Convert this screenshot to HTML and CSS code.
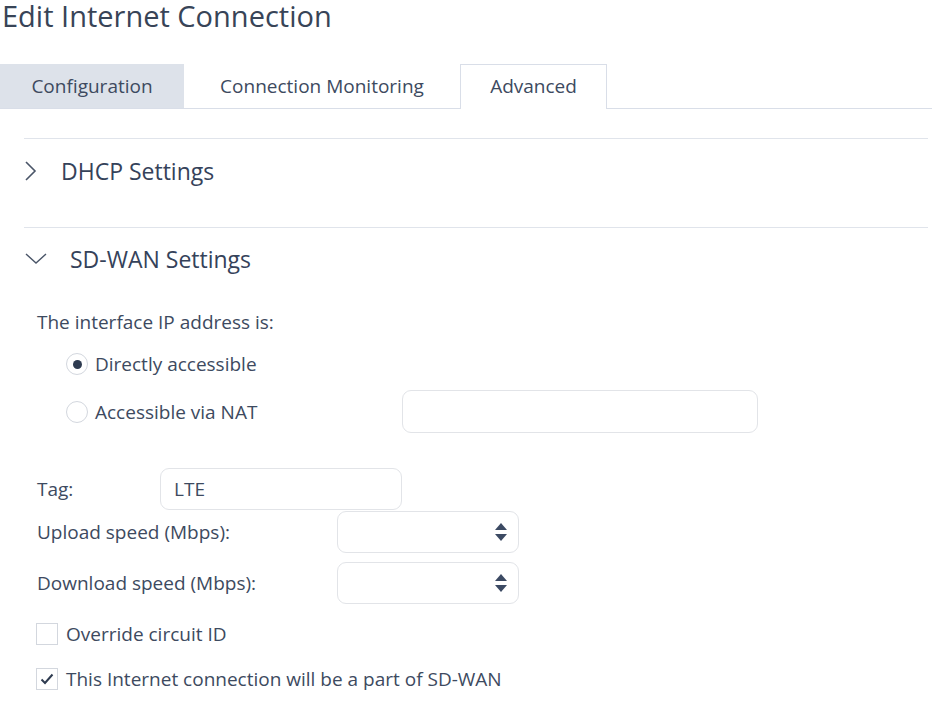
FILE: index.html
```html
<!doctype html>
<html>
<head>
    <meta charset="utf-8">
    <title>Edit Internet Connection</title>
    <link rel="stylesheet" href="styles.css">
</head>
<body>
<h1 class="title">Edit Internet Connection</h1>

<ul class="tabs">
    <li class="tab tab-config">Configuration</li>
    <li class="tab tab-monitor">Connection Monitoring</li>
    <li class="tab tab-adv active">Advanced</li>
</ul>

<div class="panel">
    <div class="section">
        <div class="sec-head sec-dhcp">
            <svg class="chev-right" width="14" height="22" viewBox="0 0 14 22">
                <path d="M2 2 L11 11 L2 20" fill="none" stroke="#4a5568" stroke-width="1.6"/>
            </svg>
            <span class="sec-title">DHCP Settings</span>
        </div>
    </div>

    <div class="section">
        <div class="sec-head sec-sdwan">
            <svg class="chev-down" width="22" height="14" viewBox="0 0 22 14">
                <path d="M1 2 L11 11 L21 2" fill="none" stroke="#4a5568" stroke-width="1.4"/>
            </svg>
            <span class="sec-title">SD-WAN Settings</span>
        </div>

        <div class="sec-body">
            <div class="row row-intro">The interface IP address is:</div>

            <div class="row row-radio1">
                <span class="radio checked"></span>
                <span>Directly accessible</span>
            </div>

            <div class="row row-radio2">
                <div class="radio-opt">
                    <span class="radio"></span>
                    <span>Accessible via NAT</span>
                </div>
                <div class="input nat-input"></div>
            </div>

            <div class="row row-tag">
                <span class="lbl lbl-tag">Tag:</span>
                <div class="input tag-input">LTE</div>
            </div>

            <div class="row row-up">
                <span class="lbl lbl-speed">Upload speed (Mbps):</span>
                <div class="input spin-input">
                    <svg class="spin" width="14" height="20" viewBox="0 0 14 20">
                        <path d="M7 1 L13 8 L1 8 Z" fill="#3c4a63"/>
                        <path d="M1 12 L13 12 L7 19 Z" fill="#3c4a63"/>
                    </svg>
                </div>
            </div>

            <div class="row row-down">
                <span class="lbl lbl-speed">Download speed (Mbps):</span>
                <div class="input spin-input">
                    <svg class="spin" width="14" height="20" viewBox="0 0 14 20">
                        <path d="M7 1 L13 8 L1 8 Z" fill="#3c4a63"/>
                        <path d="M1 12 L13 12 L7 19 Z" fill="#3c4a63"/>
                    </svg>
                </div>
            </div>

            <div class="row row-cb1">
                <span class="checkbox"></span>
                <span>Override circuit ID</span>
            </div>

            <div class="row row-cb2">
                <span class="checkbox">
                    <svg width="14" height="12" viewBox="0 0 14 12">
                        <path d="M1.5 6.5 L5 10 L12.5 1.5" fill="none" stroke="#2e3b50" stroke-width="2"/>
                    </svg>
                </span>
                <span>This Internet connection will be a part of SD-WAN</span>
            </div>
        </div>
    </div>
</div>
</body>
</html>
```

FILE: styles.css
```css
*{
    margin:0;
    padding:0;
    list-style:none;
    box-sizing:border-box;
}
body{
    font-family:"Open Sans", "Liberation Sans", sans-serif;
    color:#3d4a60;
    background:#fff;
    width:932px;
}

.title{
    font-size:29px;
    font-weight:400;
    line-height:32px;
    height:32px;
    padding-left:2px;
    color:#384457;
}

/* tabs */
.tabs{
    display:flex;
    margin-top:32px;
    height:45px;
    border-bottom:1px solid #d9dee8;
}
.tab{
    height:44px;
    line-height:44px;
    text-align:center;
    font-size:19px;
    color:#3d4a60;
}
.tab-config{
    width:184px;
    background:#dde2ea;
}
.tab-monitor{
    width:276px;
}
.tab-adv{
    width:147px;
    height:45px;
    border:1px solid #d9dee8;
    border-bottom:none;
    background:#fff;
    line-height:43px;
}

/* sections */
.panel{
    padding:29px 4px 0 24px;
}
.section{
    border-top:1px solid #e0e4eb;
}
.sec-head{
    display:flex;
    align-items:center;
}
.sec-dhcp{
    height:88px;
    padding-bottom:24px;
}
.sec-sdwan{
    height:62px;
}
.sec-title{
    font-size:23px;
    color:#35425a;
}
.chev-right{
    margin-right:23px;
}
.chev-down{
    margin-left:1px;
    margin-right:23px;
}

.sec-body{
    padding-left:13px;
    font-size:19px;
}
.row{
    display:flex;
    align-items:center;
}
.row-intro{
    height:30px;
    margin-top:17px;
}
.row-radio1{
    height:42px;
    margin-top:6px;
    padding-left:29px;
}
.row-radio2{
    height:43px;
    margin-top:5px;
    padding-left:29px;
}
.radio-opt{
    display:flex;
    align-items:center;
    width:336px;
}
.radio{
    width:22px;
    height:22px;
    border:1px solid #d3d7de;
    border-radius:50%;
    margin-right:7px;
    display:flex;
    align-items:center;
    justify-content:center;
    background:#fff;
}
.radio.checked::after{
    content:"";
    width:9px;
    height:9px;
    border-radius:50%;
    background:#2e3b50;
}

.input{
    height:43px;
    border:1px solid #e2e4e8;
    border-radius:9px;
    background:#fff;
}
.nat-input{
    width:356px;
}
.row-tag{
    height:42px;
    margin-top:35px;
}
.lbl-tag{
    width:123px;
}
.tag-input{
    width:242px;
    height:42px;
    padding-left:13px;
    line-height:40px;
}
.row-up{
    height:42px;
    margin-top:1px;
}
.row-down{
    height:42px;
    margin-top:9px;
}
.lbl-speed{
    width:300px;
}
.spin-input{
    width:182px;
    height:42px;
    display:flex;
    align-items:center;
    justify-content:flex-end;
    padding-right:10px;
}

.row-cb1{
    height:30px;
    margin-top:15px;
}
.row-cb2{
    height:30px;
    margin-top:15px;
}
.checkbox{
    width:22px;
    height:22px;
    border:1px solid #d3d7de;
    margin-left:-1px;
    margin-right:8px;
    display:flex;
    align-items:center;
    justify-content:center;
}
```
